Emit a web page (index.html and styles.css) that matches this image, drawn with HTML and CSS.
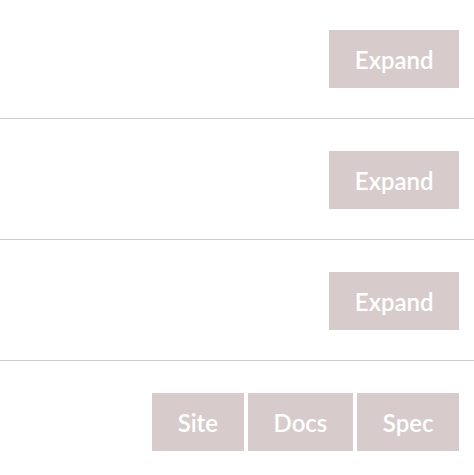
FILE: index.html
```html
<!DOCTYPE html>
<html lang="en">
<head>
    <meta charset="UTF-8">
    <meta name="viewport" content="width=device-width, initial-scale=1.0">
    <title>Links</title>
    <link rel="stylesheet" href="styles.css">
</head>
<body>
    <section class="row first">
        <button class="btn">Expand</button>
    </section>
    <section class="row">
        <button class="btn">Expand</button>
    </section>
    <section class="row">
        <button class="btn">Expand</button>
    </section>
    <section class="row last">
        <button class="btn">Site</button>
        <button class="btn">Docs</button>
        <button class="btn">Spec</button>
    </section>
</body>
</html>
```

FILE: styles.css
```css
* {
    margin: 0;
    padding: 0;
    box-sizing: border-box;
}

body {
    background-color: #fff;
    font-family: 'Lato', sans-serif;
}

/* Each row: buttons pushed to the right */
.row {
    display: flex;
    justify-content: flex-end;
    gap: 4.5px;
    padding: 32px 15px 30px;
    border-bottom: 1px solid #cfcfcf;
}

.row.first {
    padding-top: 30px;
}

.row.last {
    border-bottom: none;
}

.btn {
    height: 58px;
    padding: 1px 25.5px 0;
    font-family: 'Lato', sans-serif;
    font-size: 24px;
    font-weight: 600;
    line-height: 57px;
    color: #fff;
    background-color: #d7cccb;
    border: none;
    cursor: pointer;
}
```
